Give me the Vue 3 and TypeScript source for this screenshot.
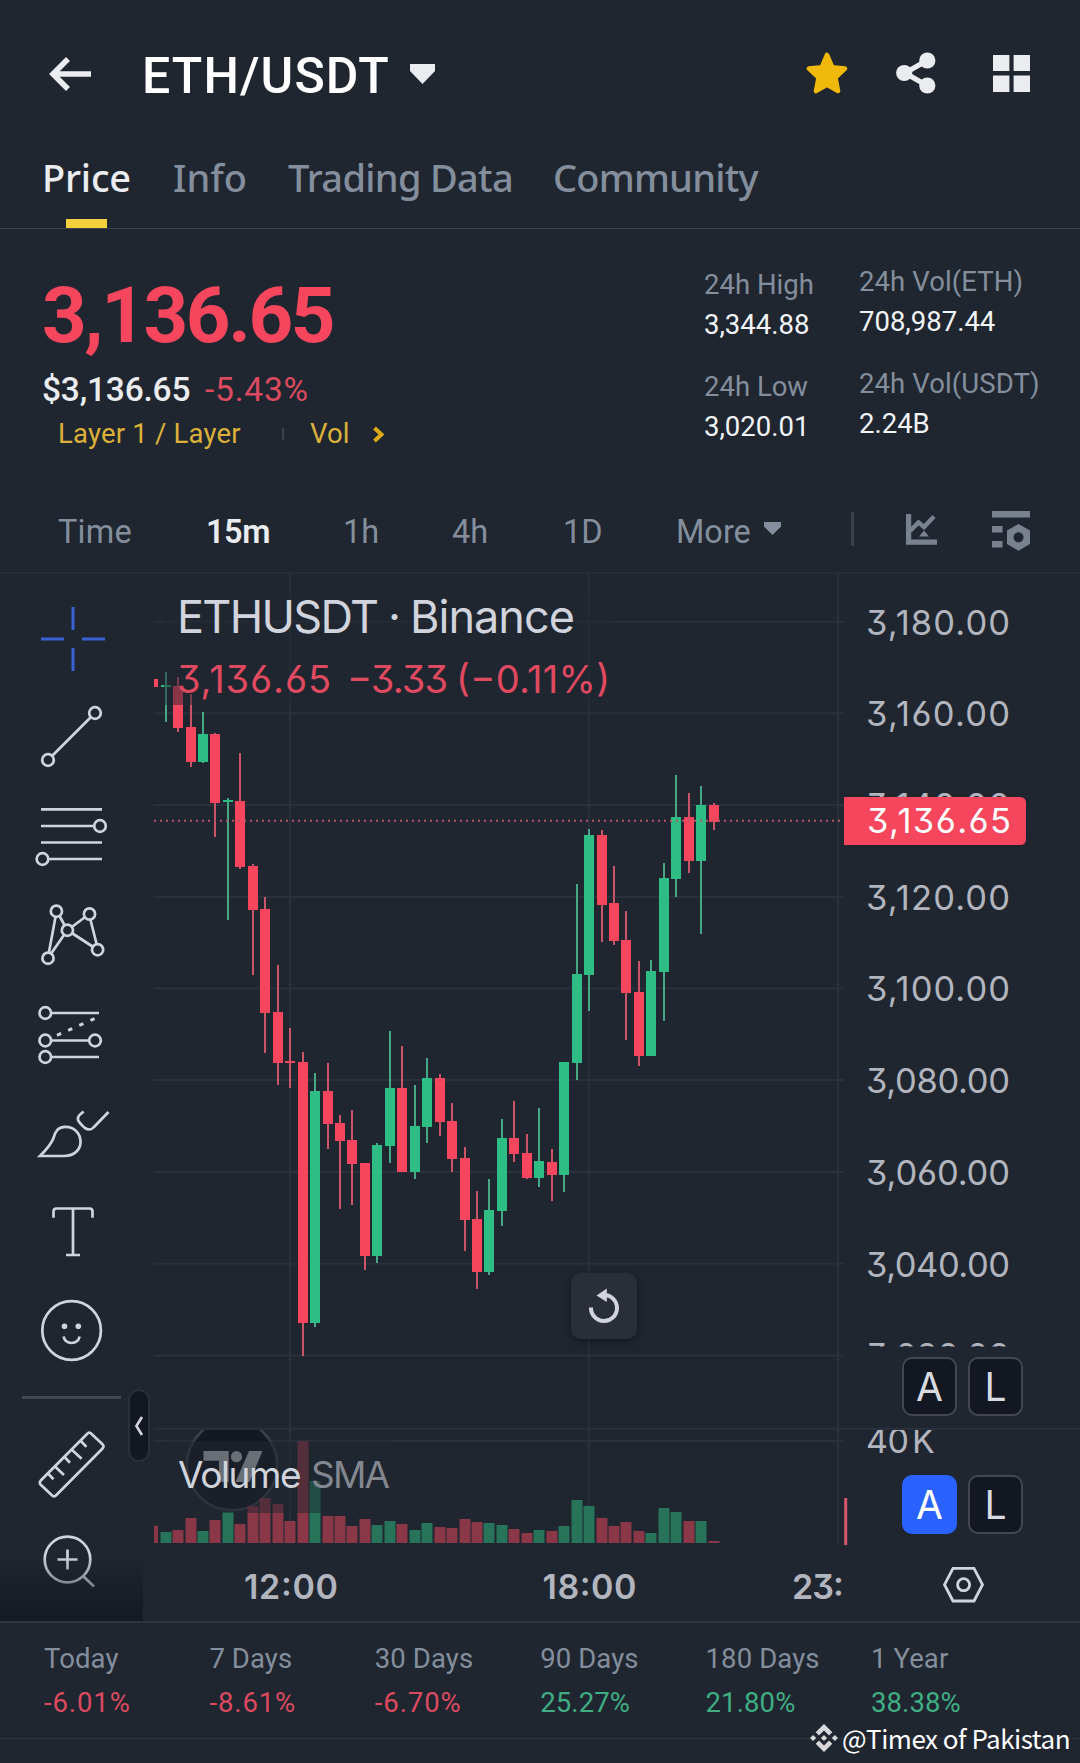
<script setup lang="ts">
type Side = 'up' | 'down'
type Candle = [side: Side, high: number, top: number, bottom: number, low: number, volumeTop: number]

const tabs = [
  { label: 'Price', cls: 'price', active: true },
  { label: 'Info', cls: 'info', active: false },
  { label: 'Trading Data', cls: 'trading', active: false },
  { label: 'Community', cls: 'community', active: false },
]

const statColumns = [
  [
    { label: '24h High', value: '3,344.88' },
    { label: '24h Low', value: '3,020.01' },
  ],
  [
    { label: '24h Vol(ETH)', value: '708,987.44' },
    { label: '24h Vol(USDT)', value: '2.24B' },
  ],
]

const frames = ['Time', '15m', '1h', '4h', '1D']

const performance = [
  { label: 'Today', value: '-6.01%' },
  { label: '7 Days', value: '-8.61%' },
  { label: '30 Days', value: '-6.70%' },
  { label: '90 Days', value: '25.27%' },
  { label: '180 Days', value: '21.80%' },
  { label: '1 Year', value: '38.38%' },
]

// Geometry of the plot: first full candle, distance between candles, volume base line
const firstX = 165.6
const step = 12.455
const volumeBase = 1543

const u: Side = 'up'
const d: Side = 'down'
const candles: Candle[] = [
  [u, 672, 685, 687, 722, 1532],
  [d, 677, 686, 728, 732, 1530],
  [d, 694, 727, 762, 767, 1518],
  [u, 712, 734, 762, 763, 1531],
  [d, 733, 734, 803, 837, 1520],
  [u, 798, 800, 802, 920, 1512],
  [d, 753, 801, 867, 869, 1524],
  [d, 864, 866, 910, 975, 1506],
  [d, 897, 909, 1013, 1053, 1498],
  [d, 965, 1012, 1063, 1085, 1504],
  [d, 1028, 1061, 1063, 1088, 1521],
  [d, 1052, 1062, 1323, 1356, 1441],
  [u, 1073, 1091, 1323, 1327, 1481],
  [d, 1063, 1091, 1124, 1149, 1516],
  [d, 1115, 1123, 1141, 1209, 1516],
  [d, 1110, 1140, 1164, 1205, 1526],
  [d, 1163, 1163, 1256, 1270, 1519],
  [u, 1143, 1145, 1256, 1263, 1525],
  [u, 1031, 1088, 1146, 1163, 1521],
  [d, 1046, 1088, 1172, 1172, 1524],
  [u, 1085, 1126, 1172, 1179, 1530],
  [u, 1058, 1078, 1127, 1143, 1523],
  [d, 1074, 1078, 1122, 1136, 1527],
  [d, 1103, 1121, 1159, 1172, 1528],
  [d, 1147, 1158, 1220, 1251, 1519],
  [d, 1191, 1219, 1272, 1289, 1522],
  [u, 1179, 1210, 1272, 1275, 1523],
  [u, 1119, 1138, 1211, 1226, 1525],
  [d, 1101, 1138, 1154, 1162, 1529],
  [d, 1134, 1153, 1178, 1179, 1533],
  [u, 1108, 1161, 1178, 1187, 1530],
  [d, 1149, 1162, 1175, 1201, 1531],
  [u, 1062, 1062, 1175, 1192, 1526],
  [u, 884, 974, 1063, 1080, 1500],
  [u, 829, 835, 975, 1011, 1506],
  [d, 830, 835, 905, 942, 1518],
  [d, 866, 903, 941, 945, 1526],
  [d, 911, 940, 993, 1040, 1522],
  [d, 961, 992, 1056, 1066, 1531],
  [u, 960, 971, 1056, 1056, 1533],
  [u, 863, 878, 972, 1021, 1508],
  [u, 775, 817, 879, 897, 1512],
  [d, 793, 817, 861, 873, 1521],
  [u, 786, 805, 861, 934, 1521],
  [d, 803, 805, 822, 830, 1541],
]

const bars = candles.map(([side, high, top, bottom, low, volumeTop], i) => {
  const x = Math.round(firstX + i * step)
  return { x, side, high, top, low, height: bottom - top, volumeTop, volumeHeight: volumeBase - volumeTop }
})

const gridRows = [621.7, 713.3, 805.1, 896.9, 988.6, 1080, 1172, 1263.8, 1355.6]
const gridColumns = [290, 588.7, 838]
const axisPrices = ['3,180.00', '3,160.00', '3,140.00', '3,120.00', '3,100.00', '3,080.00', '3,060.00', '3,040.00', '3,020.00']
</script>

<template>
  <main class="screen">
    <header class="topbar">
      <svg class="back" width="44" height="36" viewBox="0 0 44 36">
        <path d="M20 3 L5 18 L20 33 M5 18 H43" fill="none" stroke="#eaecef" stroke-width="5.6" />
      </svg>
      <h1 class="pair">ETH/USDT</h1>
      <svg class="caret" width="25" height="20" viewBox="0 0 25 20"><path d="M0 0 H25 V7 L12.5 20 L0 7 Z" fill="#eaecef" /></svg>
      <div class="actions">
        <svg width="42" height="42" viewBox="0 0 42 42">
          <path d="M21 3 L26.2 15.2 L39 16.6 L29.4 25.6 L32 39 L21 32.8 L10 39 L12.6 25.6 L3 16.6 L15.8 15.2 Z" fill="#f0b90b" stroke="#f0b90b" stroke-width="4.6" stroke-linejoin="round" />
        </svg>
        <svg width="40" height="42" viewBox="0 0 40 42">
          <path d="M31 8.5 L9 21 L31 33.5" fill="none" stroke="#eaecef" stroke-width="5.2" />
          <g fill="#eaecef"><circle cx="31.3" cy="8.5" r="8.1" /><circle cx="8.2" cy="21" r="8.1" /><circle cx="31.3" cy="33.5" r="8.1" /></g>
        </svg>
        <svg width="37" height="37" viewBox="0 0 37 37">
          <path d="M0 0h16.4v16H0zM20.6 0H37v16H20.6zM0 20.6h16.4V37H0zM20.6 20.6H37V37H20.6z" fill="#eaecef" />
        </svg>
      </div>
    </header>

    <nav class="tabs">
      <a v-for="tab in tabs" :key="tab.label" class="tab" :class="[tab.cls, { active: tab.active }]">{{ tab.label }}</a>
    </nav>

    <section class="summary">
      <div class="quote">
        <div class="last">3,136.65</div>
        <div class="fiat"><span class="usd">$3,136.65</span><span class="change">-5.43%</span></div>
        <div class="tags">
          <span>Layer 1 / Layer</span>
          <i class="tick"></i>
          <span>Vol</span>
          <svg width="13" height="17" viewBox="0 0 13 17"><path d="M2.5 2 L9.5 8.5 L2.5 15" fill="none" stroke="#dba91a" stroke-width="4" /></svg>
        </div>
      </div>
      <div v-for="(column, i) in statColumns" :key="i" class="stats">
        <dl v-for="stat in column" :key="stat.label">
          <dt>{{ stat.label }}</dt>
          <dd>{{ stat.value }}</dd>
        </dl>
      </div>
    </section>

    <nav class="frames">
      <span v-for="frame in frames" :key="frame" :class="{ on: frame === '15m' }">{{ frame }}</span>
      <span class="more">More<svg width="17" height="13" viewBox="0 0 17 13"><path d="M0 0 H17 V4.5 L8.5 13 L0 4.5 Z" fill="#848e9c" /></svg></span>
      <i class="bar"></i>
      <svg class="ind" width="31" height="31" viewBox="0 0 31 31" fill="none" stroke="#79818f">
        <path d="M2.6 0 V28.2 H31" stroke-width="5.2" />
        <path d="M4 17 L12.5 8.5 L18 13 L28 2.5" stroke-width="4.4" />
        <path d="M13 22.5 h10 l-5 -6 z" fill="#79818f" stroke="none" />
      </svg>
      <svg class="cfg" width="38" height="40" viewBox="0 0 38 40" fill="#79818f">
        <path d="M0 0h38v6.6H0zM0 15h10.5v6.4H0zM0 30h10.5v6.4H0z" />
        <path fill-rule="evenodd" d="M26.5 13 L38 19.6 V33 L26.5 39.8 L15 33 V19.6 Z M26.5 21.3 a5 5 0 1 0 .01 0 Z" />
      </svg>
    </nav>

    <section class="chart">
      <aside class="tools">
        <svg width="129" height="99" viewBox="0 589 129 99"><path d="M73 607V630M73 648V671M41 639H64M82 639H105" /></svg>
        <svg width="129" height="99" viewBox="0 688 129 99">
          <path d="M52 756 L91 717" /><circle cx="48" cy="760" r="5.8" /><circle cx="95" cy="713" r="5.8" />
        </svg>
        <svg width="129" height="99" viewBox="0 787 129 99">
          <path d="M41 809.3H102M41 826H94M41 842.5H102M49 859H102" /><circle cx="100" cy="826" r="5.8" /><circle cx="42.5" cy="859" r="5.8" />
        </svg>
        <svg width="129" height="99" viewBox="0 886 129 99">
          <path d="M55.5 917 L49 952 M59.5 916 L64.5 925 M64 935 L51.5 953 M72.5 926.5 L84.5 917.5 M90.5 920 L96.5 943.5 M72.5 933.5 L92.5 946.5" />
          <circle cx="56.4" cy="911.2" r="5.6" /><circle cx="89.5" cy="914" r="5.6" /><circle cx="67.4" cy="930.2" r="5.6" /><circle cx="97.6" cy="949.7" r="5.6" /><circle cx="48" cy="958.2" r="5.6" />
        </svg>
        <svg width="129" height="99" viewBox="0 985 129 99">
          <path d="M51 1013H99M51 1040.5H89M51 1057H99" /><path d="M57 1035.3 L97 1017.5" stroke-dasharray="4.5 7.7" stroke-width="3" />
          <circle cx="45.3" cy="1013" r="5.8" /><circle cx="45.3" cy="1040.5" r="5.8" /><circle cx="95" cy="1040.5" r="5.8" /><circle cx="45.3" cy="1057" r="5.8" />
        </svg>
        <svg width="129" height="99" viewBox="0 1084 129 99">
          <path d="M40 1156 H64 C75 1156 81 1149 80.5 1141 C80 1132 73 1126.5 65 1126.8 C58 1127 55.5 1131 53.5 1138 C51 1145 44 1152 40 1156 Z" />
          <path d="M83.7 1111.7 C77 1116 76.5 1119.5 80 1123 L84 1127.3 C87.5 1130.5 91.5 1130 94 1127 L108.5 1112" />
        </svg>
        <svg width="129" height="99" viewBox="0 1183 129 99"><path d="M53.5 1217.8V1211.5Q53.5 1208.5 56.5 1208.5H89.5Q92.5 1208.5 92.5 1211.5V1217.8M73 1208.5V1255M66 1255H80" /></svg>
        <svg width="129" height="99" viewBox="0 1282 129 99">
          <circle cx="71.6" cy="1330.5" r="29.3" /><circle class="dot" cx="64.5" cy="1326.3" r="2.8" /><circle class="dot" cx="78.3" cy="1326.3" r="2.8" />
          <path d="M63.6 1336.5 Q65 1343 71.6 1343 Q78.2 1343 79.6 1336.5" />
        </svg>
        <i class="rule"></i>
        <svg width="129" height="99" viewBox="0 1415 129 99">
          <path d="M87 1434 Q89.2 1431.4 91.6 1434 L102.3 1443.9 Q104.8 1446.3 102.3 1448.8 L56.4 1495 Q54 1497.6 51.6 1495 L41 1485 Q38.6 1482.7 41 1480.2 Z" />
          <path d="M48.5 1474 L53.5 1479.3 M55 1466.5 L64 1475 M64.5 1457 L70 1462.8 M71.5 1449.5 L81.6 1458.8 M80.5 1440.5 L86.4 1446.8" />
        </svg>
        <svg width="129" height="99" viewBox="0 1514 129 99">
          <circle cx="67.5" cy="1559.5" r="22.8" /><path d="M67.5 1549.5V1569.5M57.5 1559.5H77.5M83 1576L94 1586.5" />
        </svg>
        <div class="fade"></div>
      </aside>

      <svg class="plot" width="951" height="1047" viewBox="129 574 951 1047">
        <defs>
          <clipPath id="volume-pane"><rect x="150" y="1430" width="930" height="191" /></clipPath>
          <clipPath id="axis-pane"><rect x="846" y="574" width="234" height="772.5" /></clipPath>
          <clipPath id="time-pane"><rect x="150" y="1550" width="692" height="70" /></clipPath>
        </defs>

        <g stroke="#2a313c" stroke-width="2">
          <path v-for="x in gridColumns" :key="x" :d="`M${x} 574V1545`" />
          <path v-for="y in gridRows" :key="y" :d="`M153.5 ${y}H844`" />
          <path d="M153.5 1428.7H1080M153.5 1441H844" />
        </g>

        <g clip-path="url(#volume-pane)">
          <circle cx="232" cy="1465" r="45.2" fill="#141823" stroke="#3a3f49" stroke-width="2.5" />
          <g fill="#b4b6ba">
            <path d="M203.5 1451H228.7V1482H219V1460.8H203.5Z" /><circle cx="236.5" cy="1456.7" r="5.6" /><path d="M249 1451H262.5L249.5 1482H235.5Z" />
          </g>
        </g>

        <rect class="vol down" x="154" y="1525.7" width="4" height="17.3" />
        <rect v-for="bar in bars" :key="`v${bar.x}`" class="vol" :class="bar.side" :x="bar.x - 5.5" :y="bar.volumeTop" width="11" :height="bar.volumeHeight" />

        <rect class="down" x="154" y="679" width="4" height="8" />
        <g v-for="bar in bars" :key="bar.x" :class="bar.side">
          <rect class="wick" :x="bar.x - 1" :y="bar.high" width="2" :height="bar.low - bar.high" />
          <rect :x="bar.x - 5" :y="bar.top" width="10" :height="bar.height" />
        </g>

        <path d="M154 820.8H844" stroke="#b65766" stroke-width="2" stroke-dasharray="2 4" />

        <rect x="164" y="590" width="450" height="115" fill="#1f2630" fill-opacity=".5" />
        <rect x="164" y="1441" width="226" height="72" fill="#1f2630" fill-opacity=".5" />

        <g class="title">
          <text x="177" y="633" font-size="45" textLength="202">ETHUSDT</text>
          <text x="388" y="633" font-size="45">·</text>
          <text x="410" y="633" font-size="45" textLength="165">Binance</text>
        </g>
        <g class="loss">
          <text x="177" y="692.8" font-size="38" textLength="154">3,136.65</text>
          <text x="347" y="692.8" font-size="38" textLength="101">−3.33</text>
          <text x="456" y="692.8" font-size="38" textLength="154">(−0.11%)</text>
        </g>
        <text class="study" x="178" y="1488" font-size="37" textLength="123.5">Volume</text>
        <text class="study dim" x="311" y="1488" font-size="37" textLength="79">SMA</text>

        <g class="axis" clip-path="url(#axis-pane)">
          <text v-for="(price, i) in axisPrices" :key="price" x="866" :y="gridRows[i] + 12.8" font-size="34.5" textLength="144">{{ price }}</text>
        </g>
        <g class="axis" clip-path="url(#volume-pane)">
          <text x="866" y="1452.8" font-size="34" textLength="43">40</text>
          <text x="912" y="1452.8" font-size="34">K</text>
        </g>
        <path d="M844 797H1020Q1026 797 1026 803V839Q1026 845 1020 845H844Z" fill="#f6465d" />
        <text class="axis tag" x="867" y="833" font-size="34.5" textLength="144">3,136.65</text>
        <path d="M845.7 1498V1545" stroke="#d9566a" stroke-width="3" />

        <g class="axis times" clip-path="url(#time-pane)">
          <text x="244" y="1598.8" textLength="94">12:00</text>
          <text x="542.5" y="1598.8" textLength="94">18:00</text>
          <text x="792" y="1598.8" textLength="94">23:45</text>
        </g>
        <g fill="none" stroke="#d1d4dc" stroke-width="2.8">
          <path d="M953 1568.3H974L982.5 1584.7L974 1601H953L944.5 1584.7Z" /><circle cx="963.6" cy="1584.7" r="6" />
        </g>
      </svg>

      <button class="collapse"><svg width="10" height="20" viewBox="0 0 10 20"><path d="M8 1 L2.4 10 L8 19" fill="none" stroke="#d1d4dc" stroke-width="2.6" /></svg></button>
      <button class="reset">
        <svg width="32" height="36" viewBox="0 0 32 36">
          <path d="M3 19.5 A13 13 0 1 0 16 7" fill="none" stroke="#d1d4dc" stroke-width="4" />
          <path d="M8.5 7.5 L18.8 .5 V14 Z" fill="#d1d4dc" />
        </svg>
      </button>
      <div class="scale upper"><button>A</button><button>L</button></div>
      <div class="scale lower"><button class="blue">A</button><button>L</button></div>
    </section>

    <section class="performance">
      <dl v-for="item in performance" :key="item.label">
        <dt>{{ item.label }}</dt>
        <dd :class="{ minus: item.value.startsWith('-') }">{{ item.value }}</dd>
      </dl>
    </section>

    <footer class="credit">
      <svg width="28" height="28" viewBox="0 0 28 28" fill="#d8d8da">
        <path d="M14 0 L22.3 8.2 L19 11.4 L14 6.5 L9 11.4 L5.7 8.2 Z M14 28 L22.3 19.8 L19 16.6 L14 21.5 L9 16.6 L5.7 19.8 Z M14 10.9 L17.1 14 L14 17.1 L10.9 14 Z M3.1 10.9 L6.2 14 L3.1 17.1 L0 14 Z M24.9 10.9 L28 14 L24.9 17.1 L21.8 14 Z" />
      </svg>
      <span>@Timex of Pakistan</span>
    </footer>
  </main>
</template>

<style>
body { background: #1f2630; }
</style>

<style scoped>
* { box-sizing: border-box; margin: 0; }
.screen { width: 1080px; height: 1763px; overflow: hidden; background: #1f2630; color: #eaecef; font-family: Roboto, "Noto Sans", sans-serif; white-space: nowrap; }
button { font: inherit; padding: 0; cursor: pointer; }

.topbar { display: flex; align-items: center; height: 128px; padding: 23px 50px 0 48px; }
.back { margin-top: -4px; }
.pair { margin-left: 50px; color: #fff; font-size: 50px; font-weight: 500; letter-spacing: 1.1px; line-height: 60px; }
.caret { margin: -3px 0 0 20px; }
.actions { display: flex; align-items: center; margin: -5px 0 0 auto; }
.actions svg:nth-child(2) { margin-left: 48px; }
.actions svg:nth-child(3) { margin-left: 57px; }

.tabs { display: flex; height: 101px; border-bottom: 1px solid #3a424d; padding-left: 42px; color: #848e9c; font: 500 38px/99px "Noto Sans", sans-serif; }
.tab { position: relative; }
.tab.price { width: 131px; letter-spacing: -.2px; }
.tab.info { width: 115px; }
.tab.trading { width: 265px; letter-spacing: -.7px; }
.tab.community { letter-spacing: -.8px; }
.tab.active { color: #eaecef; }
.tab.active::after { content: ""; position: absolute; left: 24px; bottom: 0; width: 41px; height: 9px; background: #f5d03d; }

.summary { display: flex; height: 261px; }
.quote { width: 704px; padding: 45px 0 0 42px; }
.last { color: #f6465d; font-size: 78px; font-weight: 700; line-height: 84px; letter-spacing: -2.4px; }
.fiat { display: flex; margin-top: 10px; font-size: 33.5px; line-height: 44px; }
.usd { width: 163px; font-weight: 500; letter-spacing: -.2px; }
.change { color: #dc4a60; letter-spacing: .8px; }
.tags { display: flex; align-items: center; margin: 4px 0 0 16px; color: #dcb13a; font-size: 27.5px; letter-spacing: .2px; line-height: 36px; }
.tick { width: 2px; height: 12px; margin: 0 26px 0 41px; background: #3a424d; }
.tags svg { margin-left: 22px; }
.stats { width: 155px; padding-top: 36px; }
.stats + .stats { width: 200px; padding-top: 33px; }
.stats dl { height: 102px; font-size: 27.5px; line-height: 40px; }
.stats dt { color: #848e9c; }
.stats + .stats dt { letter-spacing: .1px; }
.stats dd { color: #f2f4f7; }

.frames { display: flex; align-items: center; height: 84px; border-bottom: 2px solid #272e38; padding: 2px 50px 0 58px; color: #848e9c; font-size: 32.5px; }
.frames span:nth-child(1) { width: 148px; letter-spacing: .2px; }
.frames span:nth-child(2) { width: 137px; }
.frames span:nth-child(3) { width: 109px; }
.frames span:nth-child(4) { width: 111px; }
.frames span:nth-child(5) { width: 113px; }
.frames .on { color: #eaecef; font-weight: 600; letter-spacing: -.5px; }
.more { display: flex; align-items: center; width: 175px; }
.more svg { margin: -8px 0 0 13px; }
.bar { width: 3px; height: 34px; margin-top: -6px; background: #39414c; }
.ind { margin: -6px 0 0 52px; }
.cfg { margin-left: auto; margin-top: -3px; }

.chart { position: relative; display: flex; height: 1047px; }
.tools { position: relative; display: flex; flex-direction: column; width: 129px; padding-top: 15px; }
.tools svg { flex: none; fill: none; stroke: #d1d4dc; stroke-width: 2.7; }
.tools svg:first-child { stroke: #3a61d4; stroke-width: 3; }
.tools .dot { fill: #d1d4dc; stroke: none; }
.rule { flex: none; width: 99px; height: 3px; margin: 15px 0 16px 22px; background: #434650; }
.fade { position: absolute; left: 0; bottom: 0; width: 143px; height: 66px; background: linear-gradient(rgba(20, 24, 35, 0), rgba(20, 24, 35, .95)); }
.plot { flex: none; }
.plot text { font-family: Inter, sans-serif; font-feature-settings: "cv09", "cv03", "cv04"; }
.up { fill: #2ebd85; }
.down { fill: #f6465d; }
.up .wick { fill: #48a886; }
.down .wick { fill: #cb5468; }
.vol.up { fill: #27745b; }
.vol.down { fill: #8a3747; }
.title { fill: #d1d4dc; }
.loss { fill: #e04a60; }
.plot .study { fill: #d1d4dc; font-weight: 400; }
.plot .study.dim { fill: #83878f; }
.axis { fill: #b2b5be; }
.plot .tag { fill: #fff; }
.times { font-size: 34px; font-weight: 600; }

.collapse { position: absolute; left: 128px; top: 815px; display: grid; place-items: center; width: 22px; height: 73px; border: 2px solid #2a2e39; border-radius: 11px; background: #131722; }
.reset { position: absolute; left: 571px; top: 699px; display: grid; place-items: center; width: 66px; height: 66px; border: 0; border-radius: 10px; background: #2a2e39; box-shadow: 0 3px 8px rgba(0, 0, 0, .4); }
.scale { position: absolute; left: 902px; display: flex; gap: 11px; }
.upper { top: 783px; }
.lower { top: 901px; }
.scale button { width: 55px; height: 59px; border: 2px solid #43464f; border-radius: 10px; background: #131722; color: #d9dbe1; font: 400 39px/55px Inter, sans-serif; }
.scale .blue { border-color: #2962ff; background: #2962ff; color: #fff; }

.performance { display: grid; grid-template-columns: repeat(6, 165.4px); height: 118px; border-top: 2px solid #2d343f; border-bottom: 1px solid #2d343f; padding: 16px 0 0 44px; font-size: 27.5px; line-height: 44px; }
.performance dt { height: 44px; line-height: 40px; color: #848e9c; letter-spacing: .1px; }
.performance dd { line-height: 40px; color: #3fae83; letter-spacing: .1px; }
.performance dd.minus { color: #dc4a60; letter-spacing: .9px; }

.credit { position: relative; display: flex; align-items: center; gap: 4px; margin: -16px 0 0 810px; height: 30px; color: #fff; font: 400 26px/30px "Noto Sans CJK SC", "Noto Sans", sans-serif; letter-spacing: -.5px; }
</style>
